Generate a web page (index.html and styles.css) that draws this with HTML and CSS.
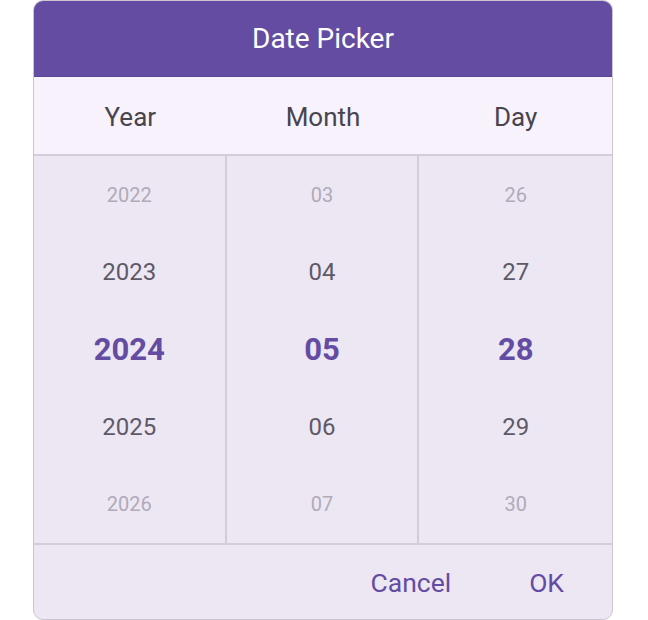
FILE: index.html
```html
<!DOCTYPE html>
<html>
<head>
<meta charset="utf-8">
<link rel="stylesheet" href="styles.css">
</head>
<body>
<div class="dialog">
  <div class="title">Date Picker</div>
  <div class="heads">
    <div class="head">Year</div>
    <div class="head">Month</div>
    <div class="head">Day</div>
  </div>
  <div class="cols">
    <div class="col">
      <div class="item far">2022</div>
      <div class="item near">2023</div>
      <div class="item sel">2024</div>
      <div class="item near">2025</div>
      <div class="item far">2026</div>
    </div>
    <div class="col">
      <div class="item far">03</div>
      <div class="item near">04</div>
      <div class="item sel">05</div>
      <div class="item near">06</div>
      <div class="item far">07</div>
    </div>
    <div class="col">
      <div class="item far">26</div>
      <div class="item near">27</div>
      <div class="item sel">28</div>
      <div class="item near">29</div>
      <div class="item far">30</div>
    </div>
  </div>
  <div class="footer">
    <button class="btn">Cancel</button>
    <button class="btn">OK</button>
  </div>
</div>
</body>
</html>
```
FILE: styles.css
```css
html, body {
  margin: 0;
  padding: 0;
  background: #ffffff;
}
body {
  font-family: Roboto, "Noto Sans", sans-serif;
}
.dialog {
  box-sizing: border-box;
  margin-left: 33px;
  width: 580px;
  height: 620px;
  border: 1px solid #cbc5d0;
  border-radius: 10px;
  overflow: hidden;
  background: #ede7f3;
  display: flex;
  flex-direction: column;
}
.title {
  box-sizing: border-box;
  height: 76px;
  flex: none;
  background: #644ca2;
  border-bottom: 1px solid #5a4694;
  color: #ffffff;
  font-size: 28px;
  display: flex;
  align-items: center;
  justify-content: center;
}
.heads {
  height: 77px;
  flex: none;
  background: #f7f2fb;
  border-bottom: 2px solid #d3cdd9;
  display: grid;
  grid-template-columns: 1fr 1fr 1fr;
}
.head {
  display: flex;
  align-items: center;
  justify-content: center;
  padding-top: 3px;
  font-size: 26px;
  color: #48444e;
}
.cols {
  height: 387px;
  flex: none;
  display: grid;
  grid-template-columns: 1fr 1fr 1fr;
  border-bottom: 2px solid #d3cdd9;
}
.col {
  display: grid;
  grid-template-rows: repeat(5, 1fr);
}
.col:not(:last-child) {
  border-right: 2px solid #d3cdd9;
}
.item {
  display: flex;
  align-items: center;
  justify-content: center;
}
.far {
  font-size: 20px;
  color: #b1aab8;
}
.near {
  font-size: 24px;
  color: #5f5967;
}
.sel {
  font-size: 31px;
  font-weight: 700;
  color: #644ca2;
}
.footer {
  flex: 1;
  display: flex;
  align-items: center;
  justify-content: flex-end;
  padding-right: 24px;
  gap: 30px;
}
.btn {
  font-family: Roboto, "Noto Sans", sans-serif;
  font-size: 26.5px;
  color: #644ca2;
  background: none;
  border: none;
  padding: 8px 24px;
}
```
